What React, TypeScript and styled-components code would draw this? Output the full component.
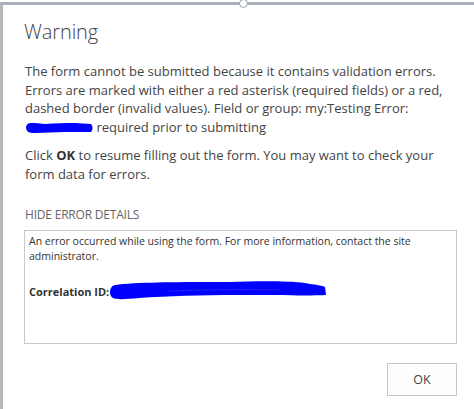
import React from "react";
import styled, { createGlobalStyle } from "styled-components";

const Global = createGlobalStyle`
  html, body { margin: 0; padding: 0; background: #ffffff; }
  body { font-family: "Open Sans", "Noto Sans", sans-serif; color: #444; }
`;

const Page = styled.div`
  position: relative;
  margin-top: 2px;
  height: 407px;
  box-sizing: border-box;
  border-top: 3px solid #a9b0b8;
  border-left: 3px solid #b9b9b9;
  background: #fff;
`;

const Handle = styled.div`
  position: absolute;
  left: 236px;
  top: -6px;
  width: 7px;
  height: 7px;
  border-radius: 50%;
  border: 1px solid #9aa2aa;
  background: #fff;
`;

const Dialog = styled.div`
  display: flex;
  flex-direction: column;
  padding: 14px 17px 0 21px;
`;

const Title = styled.h1`
  margin: 0;
  font-family: "Open Sans", sans-serif;
  font-weight: 300;
  font-size: 20px;
  line-height: 26px;
  color: #444;
  letter-spacing: -0.1px;
`;

const Body = styled.p<{ $top: number }>`
  margin: ${(p) => p.$top}px 0 0 1px;
  font-size: 13px;
  line-height: 18.5px;
  color: #444;
`;

const Strong = styled.b`
  font-weight: 700;
  color: #333;
`;

const Toggle = styled.div`
  margin: 24px 0 0 1px;
  font-size: 12px;
  line-height: 16px;
  color: #666;
  text-transform: uppercase;
  letter-spacing: -0.2px;
`;

const DetailBox = styled.div`
  margin-top: 7px;
  height: 114px;
  box-sizing: border-box;
  border: 1px solid #c8c8c8;
  padding: 3px 4px;
  font-size: 11px;
  line-height: 15px;
  color: #333;
`;

const DetailText = styled.div`
  font-size: 10.5px;
  line-height: 15px;
`;

const CorrRow = styled.div`
  margin-top: 16px;
  display: flex;
  align-items: center;
  font-weight: 700;
  color: #333;
`;

const Footer = styled.div`
  display: flex;
  justify-content: flex-end;
  margin-top: 19px;
`;

const OkButton = styled.button`
  width: 70px;
  height: 33px;
  border: 1px solid #c6c6c6;
  background: #fdfdfd;
  font-family: "Open Sans", sans-serif;
  font-size: 12.5px;
  color: #444;
  padding: 0;
`;

const ScribbleSmall = () => (
  <svg width="68" height="14" viewBox="0 0 68 14" style={{ verticalAlign: "-2px" }}>
    <path
      d="M1 7 C2 2 6 3 10 3 L20 4 C30 3 40 3 50 3 L66 4 C68 6 68 10 66 12 L40 12 C30 12 20 13 10 13 C4 13 1 12 1 7 Z"
      fill="#0000fe"
    />
  </svg>
);

const ScribbleLong = () => (
  <svg width="220" height="22" viewBox="0 0 220 22">
    <path
      d="M2 8 C4 4 8 5 14 4 C40 2 80 2 120 2 C150 1 180 1 196 3 C206 5 212 5 216 7 L217 15 C200 16 170 15 130 15 C90 15 60 16 30 18 C18 19 8 20 4 18 C1 16 0 12 2 8 Z"
      fill="#0000fe"
    />
    <path d="M60 11 C90 10 130 9 170 10" stroke="#3b3bff" strokeWidth="1" fill="none" opacity="0.6" />
  </svg>
);

export default function App() {
  return (
    <>
      <Global />
      <Page>
        <Handle />
        <Dialog>
          <Title>Warning</Title>
          <Body $top={17}>
            The form cannot be submitted because it contains validation errors.
            Errors are marked with either a red asterisk (required fields) or a red,
            dashed border (invalid values). Field or group: my:Testing Error:{" "}
            <br />
            <ScribbleSmall /> required prior to submitting
          </Body>
          <Body $top={10}>
            Click <Strong>OK</Strong> to resume filling out the form. You may want to check your
            form data for errors.
          </Body>
          <Toggle>Hide error details</Toggle>
          <DetailBox>
            <DetailText>
              An error occurred while using the form. For more information, contact the site
              administrator.
            </DetailText>
            <CorrRow>
              Correlation ID:
              <ScribbleLong />
            </CorrRow>
          </DetailBox>
          <Footer>
            <OkButton>OK</OkButton>
          </Footer>
        </Dialog>
      </Page>
    </>
  );
}
